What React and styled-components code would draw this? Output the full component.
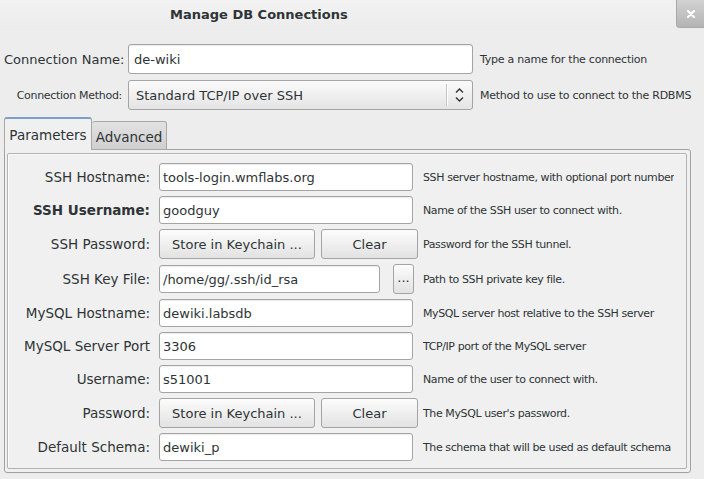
import React from "react";
import styled, { createGlobalStyle } from "styled-components";

const Global = createGlobalStyle`
  html, body {
    margin: 0;
    padding: 0;
    background: #ededed;
  }
  body {
    font-family: "DejaVu Sans", "Liberation Sans", sans-serif;
    color: #2e3436;
  }
`;

const Window = styled.div`
  width: 704px;
  height: 479px;
  overflow: hidden;
  background: #ededed;
  display: flex;
  flex-direction: column;
`;

const TitleBar = styled.div`
  height: 30px;
  flex: none;
  display: flex;
  align-items: flex-start;
  background: linear-gradient(#f2f2f2, #ececec);
`;

const Title = styled.div`
  margin: 7px 0 0 170px;
  font-weight: bold;
  font-size: 13px;
  color: #2e3436;
`;

const CloseButton = styled.div`
  margin-left: auto;
  width: 28px;
  height: 28px;
  box-sizing: border-box;
  border-left: 1px solid #a8a8a8;
  border-bottom: 1px solid #a8a8a8;
  border-bottom-left-radius: 4px;
  background: linear-gradient(#d2d2d2, #b4b4b4);
  display: flex;
  align-items: center;
  justify-content: center;
`;

const TopForm = styled.div`
  display: grid;
  grid-template-columns: 124px 345px 1fr;
  row-gap: 6px;
  padding: 14px 0 0 4px;
  align-items: center;
`;

const Label = styled.div`
  text-align: right;
  padding-right: ${(p) => p.pad}px;
  font-size: ${(p) => p.size}px;
  letter-spacing: ${(p) => (p.size < 12 ? "-0.3px" : "0")};
  font-weight: ${(p) => (p.bold ? "bold" : "normal")};
  white-space: nowrap;
  color: #2e3436;
`;

const Hint = styled.div`
  padding-left: ${(p) => p.pad}px;
  font-size: 11px;
  letter-spacing: ${(p) => p.ls}px;
  white-space: nowrap;
  overflow: hidden;
  color: #2e3436;
`;

const TextInput = styled.input`
  box-sizing: border-box;
  width: ${(p) => p.w}px;
  height: ${(p) => p.h}px;
  margin: 0;
  border: 1px solid #a4a4a4;
  border-radius: 3px;
  background: #fff;
  box-shadow: inset 0 1px 1px rgba(0, 0, 0, 0.08);
  padding: 0 0 0 ${(p) => p.pl}px;
  font-family: "DejaVu Sans", sans-serif;
  font-size: 13px;
  color: #2e3436;
  outline: none;
`;

const Select = styled.div`
  box-sizing: border-box;
  height: 30px;
  display: flex;
  align-items: center;
  border: 1px solid #a4a4a4;
  border-radius: 3px;
  background: linear-gradient(#fbfbfb, #e4e4e4);
  font-size: 13px;
`;

const SelectText = styled.div`
  flex: 1;
  padding-left: 7px;
`;

const SelectSep = styled.div`
  width: 1px;
  height: 22px;
  background: #c4c4c4;
  box-shadow: 1px 0 0 #fff;
`;

const SelectArrow = styled.div`
  width: 25px;
  display: flex;
  justify-content: center;
`;

const TabBar = styled.div`
  display: flex;
  align-items: flex-end;
  padding-left: 4px;
  margin-top: 7px;
  height: 33px;
  margin-bottom: -1px;
  position: relative;
  z-index: 1;
`;

const Tab = styled.div`
  box-sizing: border-box;
  width: ${(p) => p.w}px;
  height: ${(p) => (p.active ? 33 : 29)}px;
  display: flex;
  align-items: center;
  justify-content: center;
  font-size: 13.5px;
  border: 1px solid #a8a8a8;
  border-bottom: ${(p) => (p.active ? "none" : "1px solid #a8a8a8")};
  border-top: ${(p) => (p.active ? "2px solid #7d9fcd" : "1px solid #a8a8a8")};
  border-left: ${(p) => (p.active ? "1px solid #a8a8a8" : "none")};
  border-radius: 3px 3px 0 0;
  background: ${(p) =>
    p.active ? "#f0f0f0" : "linear-gradient(#e2e2e2, #cfcfcf)"};
  padding-top: ${(p) => (p.active ? 1 : 2)}px;
`;

const Panel = styled.div`
  flex: 1;
  margin: 0 13px 6px 4px;
  border: 1px solid #a2a2a2;
  border-radius: 0 3px 3px 3px;
  background: #f0f0f0;
  padding: 3px 3px 3px 2px;
  display: flex;
`;

const Frame = styled.div`
  flex: 1;
  border: 1px solid #b2b2b2;
  border-radius: 2px;
  box-shadow: inset 1px 1px 0 #fafafa;
  padding: 9px 0 0 0;
  display: grid;
  grid-template-columns: 151px 259px 256px;
  grid-auto-rows: min-content;
  row-gap: 5px;
  align-items: center;
`;

const Field = styled.div`
  display: flex;
  align-items: center;
  gap: ${(p) => p.gap}px;
`;

const Button = styled.button`
  box-sizing: border-box;
  width: ${(p) => p.w}px;
  height: 30px;
  margin: 0;
  padding: 0;
  border: 1px solid #a4a4a4;
  border-radius: 3px;
  background: linear-gradient(#fcfcfc, #e2e2e2);
  font-family: "DejaVu Sans", sans-serif;
  font-size: 13px;
  color: #2e3436;
  display: flex;
  align-items: center;
  justify-content: center;
  padding-bottom: ${(p) => (p.dots ? 4 : 0)}px;
`;

const fields = [
  { label: "SSH Hostname:", value: "tools-login.wmflabs.org", hint: "SSH server hostname, with optional port number" },
  { label: "SSH Username:", value: "goodguy", hint: "Name of the SSH user to connect with.", bold: true },
  { label: "SSH Password:", keychain: true, hint: "Password for the SSH tunnel." },
  { label: "SSH Key File:", value: "/home/gg/.ssh/id_rsa", file: true, hint: "Path to SSH private key file." },
  { label: "MySQL Hostname:", value: "dewiki.labsdb", hint: "MySQL server host relative to the SSH server" },
  { label: "MySQL Server Port", value: "3306", hint: "TCP/IP port of the MySQL server" },
  { label: "Username:", value: "s51001", hint: "Name of the user to connect with." },
  { label: "Password:", keychain: true, hint: "The MySQL user's password." },
  { label: "Default Schema:", value: "dewiki_p", hint: "The schema that will be used as default schema" },
];

const renderField = (f) => {
  if (f.keychain) {
    return (
      <Field gap={6}>
        <Button w={156}>Store in Keychain ...</Button>
        <Button w={97}>Clear</Button>
      </Field>
    );
  }
  if (f.file) {
    return (
      <Field gap={13}>
        <TextInput w={221} h={28} pl={3} defaultValue={f.value} readOnly />
        <Button w={21} dots>
          ...
        </Button>
      </Field>
    );
  }
  return <TextInput w={254} h={28} pl={3} defaultValue={f.value} readOnly />;
};

export default function App() {
  return (
    <Window>
      <Global />
      <TitleBar>
        <Title>Manage DB Connections</Title>
        <CloseButton>
          <svg width="10" height="10" viewBox="0 0 10 10">
            <path d="M2 2 L8 8 M8 2 L2 8" stroke="#fff" strokeWidth="2.2" strokeLinecap="round" />
          </svg>
        </CloseButton>
      </TitleBar>

      <TopForm>
        <Label pad={6} size={13}>
          Connection Name:
        </Label>
        <TextInput w={345} h={30} pl={5} defaultValue="de-wiki" readOnly />
        <Hint pad={7} ls={-0.25}>
          Type a name for the connection
        </Hint>

        <Label pad={6} size={11}>
          Connection Method:
        </Label>
        <Select>
          <SelectText>Standard TCP/IP over SSH</SelectText>
          <SelectSep />
          <SelectArrow>
            <svg width="9" height="16" viewBox="0 0 9 16">
              <path d="M1 5.5 L4.5 2 L8 5.5 M1 10.5 L4.5 14 L8 10.5" fill="none" stroke="#2e3436" strokeWidth="1.4" />
            </svg>
          </SelectArrow>
        </Select>
        <Hint pad={7} ls={-0.25}>
          Method to use to connect to the RDBMS
        </Hint>
      </TopForm>

      <TabBar>
        <Tab w={88} active>
          Parameters
        </Tab>
        <Tab w={75}>Advanced</Tab>
      </TabBar>

      <Panel>
        <Frame>
          {fields.map((f) => (
            <React.Fragment key={f.label}>
              <Label pad={9} size={13.5} bold={f.bold}>
                {f.label}
              </Label>
              {renderField(f)}
              <Hint pad={5} ls={-0.4}>
                {f.hint}
              </Hint>
            </React.Fragment>
          ))}
        </Frame>
      </Panel>
    </Window>
  );
}
